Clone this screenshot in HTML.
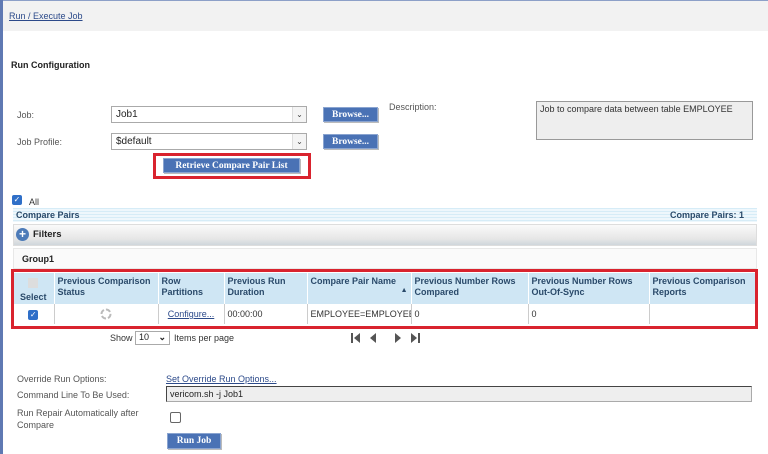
<!DOCTYPE html>
<html><head><meta charset="utf-8"><style>
*{margin:0;padding:0;box-sizing:border-box}
body{width:768px;height:454px;position:relative;background:#fff;font-family:"Liberation Sans",Tahoma,sans-serif;font-size:9px;color:#333;overflow:hidden}
.a{position:absolute;white-space:nowrap}
.btn{position:absolute;background:#4a72b5;color:#fff;font-weight:bold;font-family:"Liberation Serif",serif;font-size:9.5px;display:flex;align-items:center;justify-content:center;border:1px solid #8aa4d0;box-shadow:1px 1px 0 #bbb}
.sel{position:absolute;border:1px solid #aaa;background:#fff;font-size:10px;padding:2px 4px;color:#222}
.sel .ar{position:absolute;right:0;top:0;bottom:0;width:14px;border-left:1px solid #ddd;background:#f4f4f4;font-size:8px;text-align:center;line-height:15px;color:#444}
.cb{position:absolute;width:10px;height:10px;background:#2f6fc8;border-radius:2px;color:#fff;font-size:8px;line-height:10px;text-align:center}
table{position:absolute;left:13px;top:273px;border-collapse:collapse;width:742px;table-layout:fixed}
th{background:#cfe6f4;color:#2a4a6a;font-weight:bold;text-align:left;vertical-align:top;padding:3px 3px;font-size:9px;line-height:11px;border-right:1px solid #fff;height:31px;overflow:hidden}
td{height:20px;padding:0 3px;border-right:1px solid #ccc;font-size:9px;color:#333;white-space:nowrap;overflow:hidden}
</style></head><body>
<div class="a" style="left:0;top:0;width:3px;height:454px;background:#5f79b3"></div>
<div class="a" style="left:3px;top:0;width:765px;height:31px;background:#f2f2f2;border-top:1px solid #8da0c8"></div>
<div class="a" style="left:9px;top:11px;color:#2c4a8a;text-decoration:underline">Run / Execute Job</div>
<div class="a" style="left:11px;top:60px;font-weight:bold;color:#222">Run Configuration</div>
<div class="a" style="left:17px;top:110px;color:#555">Job:</div>
<div class="sel" style="left:111px;top:106px;width:196px;height:17px">Job1<span class="ar">&#8964;</span></div>
<div class="btn" style="left:323px;top:107px;width:55px;height:15px">Browse...</div>
<div class="a" style="left:17px;top:137px;color:#555">Job Profile:</div>
<div class="sel" style="left:111px;top:133px;width:196px;height:17px">$default<span class="ar">&#8964;</span></div>
<div class="btn" style="left:323px;top:134px;width:55px;height:15px">Browse...</div>
<div class="a" style="left:153px;top:153px;width:158px;height:26px;border:3px solid #d9232e"></div>
<div class="btn" style="left:163px;top:158px;width:137px;height:15px">Retrieve Compare Pair List</div>
<div class="a" style="left:389px;top:102px;color:#555">Description:</div>
<div class="a" style="left:536px;top:101px;width:217px;height:39px;background:#eee;border:1px solid #999;padding:2px 3px;color:#333">Job to compare data between table EMPLOYEE</div>
<div class="cb" style="left:12px;top:195px">✓</div>
<div class="a" style="left:29px;top:197px">All</div>
<div class="a" style="left:13px;top:208px;width:744px;height:14px;background:repeating-linear-gradient(#d6ecf7 0 1px,#eef7fc 1px 3px)"></div>
<div class="a" style="left:16px;top:210px;font-weight:bold;color:#2a4a6a">Compare Pairs</div>
<div class="a" style="left:670px;top:210px;font-weight:bold;color:#2a4a6a">Compare Pairs: 1</div>
<div class="a" style="left:13px;top:224px;width:744px;height:22px;background:linear-gradient(#fafafa,#e6e6e6 70%,#cfd6dc);border:1px solid #ddd"></div>
<div class="a" style="left:16px;top:228px;width:13px;height:13px;border-radius:50%;background:#4d7bb8;color:#fff;font-weight:bold;font-size:12px;line-height:12px;text-align:center">+</div>
<div class="a" style="left:33px;top:229px;font-weight:bold;color:#222;font-size:9.5px">Filters</div>
<div class="a" style="left:13px;top:248px;width:744px;height:21px;background:#fafafa;border:1px solid #e8e8e8"></div>
<div class="a" style="left:22px;top:254px;font-weight:bold;color:#222">Group1</div>
<table>
<colgroup><col style="width:41px"><col style="width:104px"><col style="width:66px"><col style="width:83px"><col style="width:104px"><col style="width:117px"><col style="width:121px"><col style="width:106px"></colgroup>
<tr><th style="text-align:center;vertical-align:bottom;padding-bottom:1px"><div style="width:10px;height:10px;background:#ddd;margin:0 auto 4px"></div>Select</th><th>Previous Comparison Status</th><th>Row Partitions</th><th>Previous Run Duration</th><th>Compare Pair Name<div style="text-align:right;font-size:7px;line-height:8px">▲</div></th><th>Previous Number Rows Compared</th><th>Previous Number Rows Out-Of-Sync</th><th>Previous Comparison Reports</th></tr>
<tr><td style="text-align:center"><span class="cb" style="position:relative;display:inline-block">✓</span></td><td style="text-align:center"><svg width="12" height="12" viewBox="0 0 12 12" style="vertical-align:middle"><circle cx="6" cy="6" r="4.5" fill="none" stroke="#bbb" stroke-width="2" stroke-dasharray="5 2"/></svg></td><td style="text-align:center;color:#2c4a8a;text-decoration:underline">Configure...</td><td>00:00:00</td><td>EMPLOYEE=EMPLOYEE</td><td>0</td><td>0</td><td style="border-right:none"></td></tr>
</table>
<div class="a" style="left:11px;top:269px;width:747px;height:60px;border:3px solid #d9232e"></div>
<div class="a" style="left:110px;top:333px">Show</div>
<div class="sel" style="left:135px;top:331px;width:35px;height:14px;padding:0 3px;font-size:9px">10<span style="position:absolute;right:3px;font-weight:bold">⌄</span></div>
<div class="a" style="left:174px;top:333px">Items per page</div>
<svg class="a" style="left:350px;top:332px" width="72" height="12" viewBox="0 0 72 12" fill="#555"><rect x="1" y="1" width="2" height="10"/><path d="M10 1 L4 6 L10 11Z"/><path d="M26 1 L20 6 L26 11Z"/><path d="M45 1 L51 6 L45 11Z"/><path d="M61 1 L67 6 L61 11Z"/><rect x="68" y="1" width="2" height="10"/></svg>
<div class="a" style="left:17px;top:374px;color:#555">Override Run Options:</div>
<div class="a" style="left:166px;top:374px;color:#2c4a8a;text-decoration:underline">Set Override Run Options...</div>
<div class="a" style="left:17px;top:390px;color:#555">Command Line To Be Used:</div>
<div class="a" style="left:166px;top:386px;width:586px;height:16px;background:#eee;border:1px solid #666;border-color:#444 #aaa #aaa #444;padding:2px 3px;color:#222">vericom.sh -j Job1</div>
<div class="a" style="left:17px;top:407px;color:#555;line-height:12px">Run Repair Automatically after<br>Compare</div>
<div class="a" style="left:170px;top:412px;width:11px;height:11px;border:1px solid #666;border-radius:2px"></div>
<div class="btn" style="left:167px;top:433px;width:54px;height:16px">Run Job</div>
</body></html>
